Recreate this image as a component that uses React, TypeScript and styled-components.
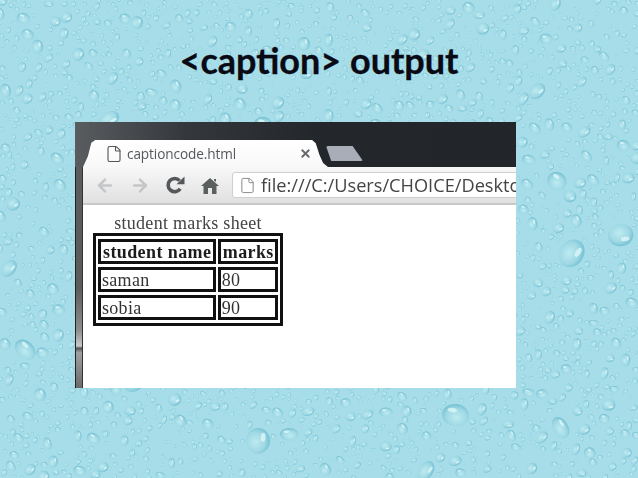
import React from 'react';
import styled, { createGlobalStyle } from 'styled-components';
import { ArrowLeft, ArrowRight, File, X } from 'lucide-react';

const Global = createGlobalStyle`
  html, body { margin: 0; padding: 0; background: #a6dde8; }
`;

const Slide = styled.div`
  position: relative;
  width: 638px;
  height: 478px;
  overflow: hidden;
  background: #a6dde8;
`;

const Backdrop = styled.svg`
  position: absolute;
  inset: 0;
  filter: blur(0.4px);
`;

const Title = styled.h1`
  position: relative;
  margin: 0;
  padding-top: 40px;
  height: 40px;
  line-height: 40px;
  text-align: center;
  font-family: Lato, "Open Sans", sans-serif;
  font-weight: 700;
  font-size: 36px;
  color: #0a0a14;
  -webkit-text-stroke: 0.3px #0a0a14;
`;

const Shot = styled.div`
  position: relative;
  margin: 42px 0 0 75px;
  width: 441px;
  height: 266px;
  display: flex;
  flex-direction: column;
  overflow: hidden;
  filter: blur(0.4px);
`;

const TitleBar = styled.div`
  height: 45px;
  flex: none;
  display: flex;
  align-items: flex-end;
  padding-left: 8px;
  background: linear-gradient(90deg, #5a5d60 0%, #34373b 25%, #23262b 55%, #22252a 100%);
`;

const Tab = styled.div`
  width: 245px;
  height: 27px;
  box-sizing: border-box;
  display: flex;
  align-items: center;
  gap: 4px;
  padding: 0 16px 0 22px;
  background: linear-gradient(180deg, #ffffff, #f8f8f8);
  clip-path: polygon(0 100%, 2% 60%, 3.4% 10%, 5% 0, 93.5% 0, 95% 12%, 96.5% 55%, 98% 85%, 100% 100%);
  color: #555;
`;

const TabIcon = styled(File)`
  flex: none;
`;

const TabLabel = styled.span`
  font-family: "Open Sans", sans-serif;
  font-size: 13.6px;
  letter-spacing: -0.1px;
  color: #55585c;
`;

const Close = styled(X)`
  margin-left: auto;
  flex: none;
  color: #666a70;
`;

const NewTab = styled.div`
  width: 37px;
  height: 15px;
  margin: 0 0 6px -2px;
  background: #a9adb8;
  border-radius: 2px;
  clip-path: polygon(0 0, 72% 0, 100% 100%, 14% 100%);
`;

const Body = styled.div`
  flex: 1;
  display: flex;
  min-height: 0;
`;

const Edge = styled.div`
  width: 8px;
  flex: none;
  box-sizing: border-box;
  border-left: 1px solid #222;
  border-right: 1px solid #333;
  background: linear-gradient(180deg, #5a5c5e 0%, #5c5c5c 55%, #8e8e8e 74%, #c9c9c9 81%, #555 82%, #a0a0a0 84%, #6a6a6a 100%);
`;

const Main = styled.div`
  flex: 1;
  min-width: 0;
  display: flex;
  flex-direction: column;
`;

const Toolbar = styled.div`
  height: 38px;
  flex: none;
  box-sizing: border-box;
  display: flex;
  align-items: center;
  gap: 15px;
  padding-left: 12px;
  background: linear-gradient(180deg, #f8f8f8, #e0e0e0);
  border-bottom: 2px solid #c8c8c8;
`;

const NavSlot = styled.span<{ $color: string }>`
  width: 20px;
  height: 20px;
  flex: none;
  display: flex;
  align-items: center;
  justify-content: center;
  color: ${p => p.$color};
`;

const Address = styled.div`
  flex: none;
  width: 300px;
  height: 26px;
  margin-left: -3px;
  box-sizing: border-box;
  display: flex;
  align-items: center;
  gap: 5px;
  padding-left: 6px;
  background: #fff;
  border: 1px solid #cfcfcf;
  border-radius: 3px;
  color: #8a8a8a;
`;

const PageIcon = styled(File)`
  flex: none;
`;

const Url = styled.span`
  flex: none;
  font-family: "Open Sans", sans-serif;
  font-size: 18.2px;
  white-space: nowrap;
  color: #444;
`;

const Page = styled.div`
  flex: 1;
  background: #fff;
  padding: 9px 0 0 10px;
`;

const Marks = styled.table`
  width: 190px;
  box-sizing: border-box;
  border-collapse: separate;
  border-spacing: 2px 3px;
  border: 3px solid #111;
  font-family: "Liberation Serif", serif;
  font-size: 18px;
  line-height: 18px;
  color: #333;

  caption {
    height: 19px;
    line-height: 19px;
    color: #444;
    white-space: nowrap;
    letter-spacing: 0.3px;
  }
`;

const HeadCell = styled.th`
  height: 25px;
  box-sizing: border-box;
  padding: 0 1px 0 2px;
  border: 3px solid #111;
  font-weight: 700;
  text-align: left;
  color: #1c1c1c;
  letter-spacing: 0.4px;
  white-space: nowrap;
`;

const Cell = styled.td`
  height: 25px;
  box-sizing: border-box;
  padding: 0 1px;
  border: 3px solid #111;
  letter-spacing: 0.3px;
`;

function rng(seed: number) {
  let s = seed;
  return () => {
    s = (s * 1664525 + 1013904223) % 4294967296;
    return s / 4294967296;
  };
}

type Drop = { x: number; y: number; rx: number; ry: number; a: number };

const drops: Drop[] = (() => {
  const r = rng(23);
  const list: Drop[] = [];
  for (let i = 0; i < 6000; i++) {
    const big = r();
    const size = big > 0.97 ? 9 + r() * 6 : big > 0.65 ? 4 + r() * 3 : 1.5 + r() * 2;
    const drop = { x: r() * 638, y: r() * 478, rx: size, ry: size * (0.6 + r() * 0.35), a: r() * 180 };
    const clash = list.some(d => Math.hypot(d.x - drop.x, d.y - drop.y) < d.rx + drop.rx - 0.5);
    if (!clash) list.push(drop);
  }
  return list;
})();

const Water = () => (
  <Backdrop width="638" height="478" viewBox="0 0 638 478">
    <defs>
      <radialGradient id="drop" cx="0.55" cy="0.6" r="0.6">
        <stop offset="0" stopColor="#bdebf1" />
        <stop offset="0.65" stopColor="#9fd8e4" />
        <stop offset="1" stopColor="#76c1d4" />
      </radialGradient>
    </defs>
    {drops.map((d, i) => (
      <g key={i} transform={`translate(${d.x} ${d.y}) rotate(${d.a})`}>
        <ellipse rx={d.rx} ry={d.ry} fill="url(#drop)" />
        <ellipse cx={-d.rx * 0.3} cy={-d.ry * 0.4} rx={d.rx * 0.35} ry={d.ry * 0.2} fill="#e0f8fa" opacity="0.75" />
      </g>
    ))}
  </Backdrop>
);

const HomeIcon = () => (
  <svg width="18" height="17" viewBox="0 0 18 17">
    <path d="M9 1 L18 9 L15.5 9 L15.5 17 L11 17 L11 11 L7 11 L7 17 L2.5 17 L2.5 9 L0 9 Z M13 2 H15 V5 L13 3.4 Z" fill="#5c5f60" />
  </svg>
);

const ReloadIcon = () => (
  <svg width="19" height="18" viewBox="0 0 19 18">
    <path d="M14.2 12.8 A6.6 6.6 0 1 1 13.6 4.6" fill="none" stroke="#55585a" strokeWidth="3.6" />
    <path d="M10.5 8.2 L18.5 8.2 L18.5 0.5 Z" fill="#55585a" />
  </svg>
);

export default function App() {
  return (
    <Slide>
      <Global />
      <Water />
      <Title>&lt;caption&gt; output</Title>
      <Shot>
        <TitleBar>
          <Tab>
            <TabIcon size={18} strokeWidth={1.5} />
            <TabLabel>captioncode.html</TabLabel>
            <Close size={13} strokeWidth={3.5} />
          </Tab>
          <NewTab />
        </TitleBar>
        <Body>
          <Edge />
          <Main>
            <Toolbar>
              <NavSlot $color="#c4c6c8"><ArrowLeft size={21} strokeWidth={3} /></NavSlot>
              <NavSlot $color="#c4c6c8"><ArrowRight size={21} strokeWidth={3} /></NavSlot>
              <NavSlot $color="#55585a"><ReloadIcon /></NavSlot>
              <NavSlot $color="#55585a"><HomeIcon /></NavSlot>
              <Address>
                <PageIcon size={17} strokeWidth={1.4} />
                <Url>file:///C:/Users/CHOICE/Deskto</Url>
              </Address>
            </Toolbar>
            <Page>
              <Marks>
                <caption>student marks sheet</caption>
                <tbody>
                  <tr>
                    <HeadCell>student name</HeadCell>
                    <HeadCell>marks</HeadCell>
                  </tr>
                  <tr>
                    <Cell>saman</Cell>
                    <Cell>80</Cell>
                  </tr>
                  <tr>
                    <Cell>sobia</Cell>
                    <Cell>90</Cell>
                  </tr>
                </tbody>
              </Marks>
            </Page>
          </Main>
        </Body>
      </Shot>
    </Slide>
  );
}
